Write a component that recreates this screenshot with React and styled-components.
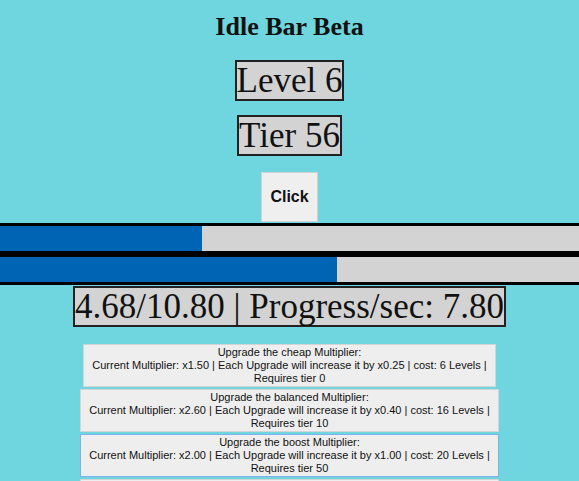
import React from 'react';
import styled, { createGlobalStyle } from 'styled-components';

const GlobalStyle = createGlobalStyle`
  body {
    margin: 0;
    background: #6fd6df;
    font-family: "Liberation Serif", "Times New Roman", serif;
    overflow: hidden;
  }
`;

const Page = styled.div`
  display: flex;
  flex-direction: column;
  align-items: center;
`;

const Title = styled.h1`
  margin: 12px 0 18px;
  font-size: 26px;
  line-height: 30px;
  font-weight: bold;
  color: #111;
`;

const StatBox = styled.div`
  background: #d3d3d3;
  border: 2px solid #222;
  font-size: 35px;
  line-height: 37px;
  color: #111;
  white-space: nowrap;
  margin-bottom: ${p => p.gap || 0}px;
`;

const ClickButton = styled.button`
  font-family: "Liberation Sans", Arial, sans-serif;
  font-weight: bold;
  font-size: 16px;
  line-height: 18px;
  padding: 15px 8px;
  background: #efefef;
  border: 1px solid #d2d2d2;
  color: #111;
  margin-bottom: 1px;
`;

const Bars = styled.div`
  align-self: stretch;
  margin-bottom: 1px;
`;

const Bar = styled.div`
  height: 25px;
  background: #d3d3d3;
  border-top: 3px solid #000;
  border-bottom: 3px solid #000;
  display: flex;
`;

const Fill = styled.div`
  background: #0064b4;
  height: 100%;
`;

const Upgrades = styled.div`
  margin-top: 17px;
  display: flex;
  flex-direction: column;
  align-items: center;
  gap: 2px;
`;

const UpgradeButton = styled.button`
  font-family: "Liberation Sans", Arial, sans-serif;
  font-size: 11px;
  line-height: 13px;
  padding: 1px 8px;
  background: #eeeeee;
  border: 1px solid ${p => (p.hover ? '#7db4e8' : '#d4d4d4')};
  color: #111;
  text-align: center;
`;

const upgrades = [
  { name: 'cheap', mult: '1.50', inc: '0.25', cost: 6, tier: 0 },
  { name: 'balanced', mult: '2.60', inc: '0.40', cost: 16, tier: 10 },
  { name: 'boost', mult: '2.00', inc: '1.00', cost: 20, tier: 50, hover: true },
  { name: 'extreme', mult: '1.00', inc: '2.00', cost: 40, tier: 100 },
];

export default function App() {
  return (
    <Page>
      <GlobalStyle />
      <Title>Idle Bar Beta</Title>
      <StatBox gap={14}>Level 6</StatBox>
      <StatBox gap={16}>Tier 56</StatBox>
      <ClickButton>Click</ClickButton>
      <Bars>
        <Bar><Fill style={{ width: '34.9%' }} /></Bar>
        <Bar><Fill style={{ width: '58.2%' }} /></Bar>
      </Bars>
      <StatBox>4.68/10.80 | Progress/sec: 7.80</StatBox>
      <Upgrades>
        {upgrades.map(u => (
          <UpgradeButton key={u.name} hover={u.hover}>
            Upgrade the {u.name} Multiplier:<br />
            Current Multiplier: x{u.mult} | Each Upgrade will increase it by x{u.inc} | cost: {u.cost} Levels |<br />
            Requires tier {u.tier}
          </UpgradeButton>
        ))}
      </Upgrades>
    </Page>
  );
}
